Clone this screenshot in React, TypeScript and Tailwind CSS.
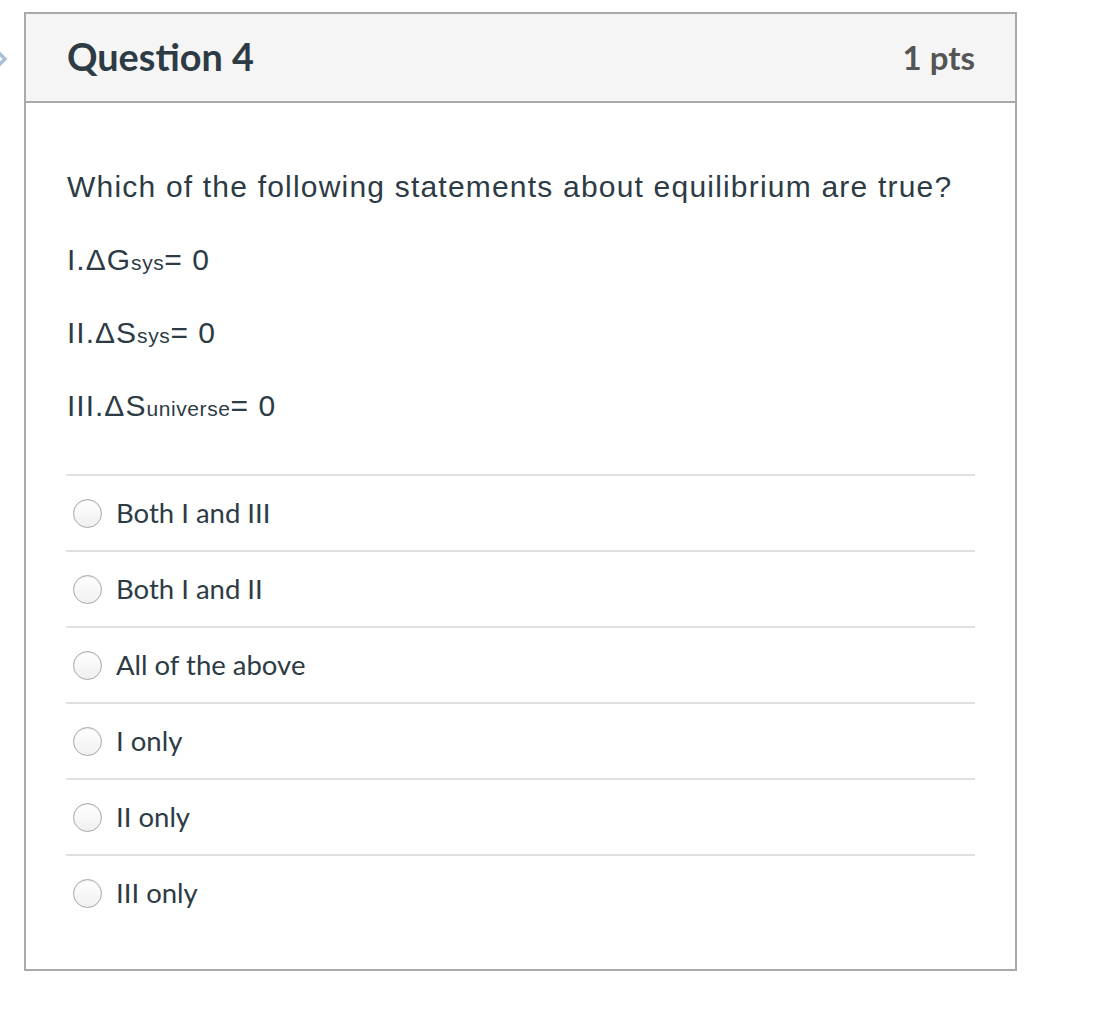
import React from 'react';

const options = ['Both I and III', 'Both I and II', 'All of the above', 'I only', 'II only', 'III only'];

function Radio() {
  return (
    <span className="block h-[29px] w-[29px] shrink-0 rounded-full border border-[#a8a8a8] bg-gradient-to-b from-white to-[#f0f0f0] shadow-[inset_0_1px_1px_rgba(0,0,0,0.08)]" />
  );
}

function Statement({ prefix, sub }: { prefix: string; sub: string }) {
  return (
    <p className="h-[36px] text-[30px] leading-[36px] tracking-[1px] text-[#2d3b45]">
      {prefix}
      <span className="text-[21px] leading-[0] tracking-[0.6px]">{sub}</span>= 0
    </p>
  );
}

export default function App() {
  return (
    <div className="relative min-h-[1020px] bg-white pl-[24px] pt-[12px]">
      <svg className="absolute left-[-8px] top-[49px]" width="16" height="20" viewBox="0 0 16 20">
        <path d="M5 2 L13 10 L5 18" fill="none" stroke="#a9c2dc" strokeWidth="3.5" />
      </svg>
      <div className="w-[993px] border-2 border-[#aaaaaa] bg-white">
        <div className="flex h-[89px] items-center justify-between border-b-2 border-[#aaaaaa] bg-[#f5f5f5] pl-[41px] pr-[40px] font-['Lato',sans-serif] font-bold">
          <h2 className="text-[37.8px] text-[#2d3b45]">Question 4</h2>
          <span className="text-[33px] text-[#555555]">1 pts</span>
        </div>
        <div className="px-[40px] pb-[39px] pt-[66px]">
          <div className="flex flex-col gap-[37px] pl-[1px] font-['Liberation_Sans',Arial,sans-serif]">
            <p className="text-[30px] leading-[36px] tracking-[1.2px] text-[#2d3b45]">
              Which of the following statements about equilibrium are true?
            </p>
            <Statement prefix="I.ΔG" sub="sys" />
            <Statement prefix="II.ΔS" sub="sys" />
            <Statement prefix="III.ΔS" sub="universe" />
          </div>
          <div className="mt-[50px] font-['Lato',sans-serif]">
            {options.map((o) => (
              <div key={o} className="flex h-[76px] items-center gap-[14px] border-t-2 border-[#e0e0e0] pl-[7px]">
                <Radio />
                <span className="text-[27.5px] text-[#2d3b45]">{o}</span>
              </div>
            ))}
          </div>
        </div>
      </div>
    </div>
  );
}
